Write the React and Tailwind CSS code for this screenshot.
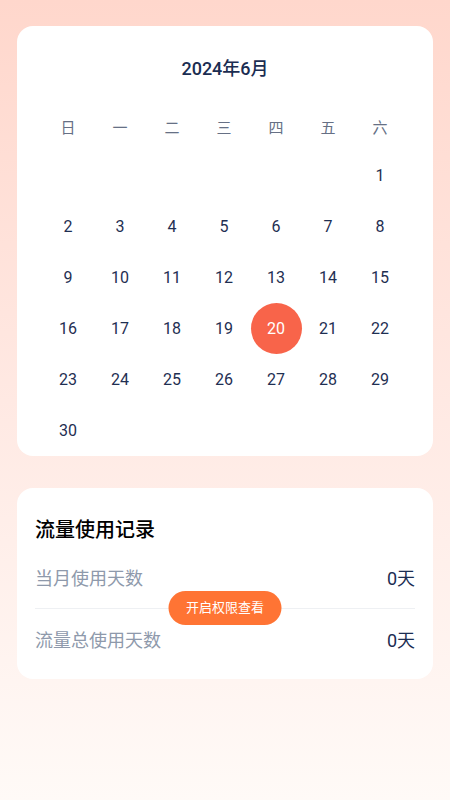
import React from 'react'

const weekdays = ['日', '一', '二', '三', '四', '五', '六']
const FONT = "font-['Roboto','Noto_Sans_CJK_SC',sans-serif]"

function buildDays() {
  // June 2024 starts on Saturday
  const cells = Array(6).fill(null)
  for (let d = 1; d <= 30; d++) cells.push(d)
  return cells
}

export default function App() {
  const days = buildDays()
  return (
    <div className={`min-h-[800px] w-full bg-gradient-to-b from-[#ffd7cc] via-[#ffe9e3] to-[#fffaf7] px-[17px] pt-[26px] ${FONT}`}>
      {/* Calendar */}
      <div className="rounded-2xl bg-white pt-[31px]">
        <h1 className="text-center text-[18px] leading-[24px] font-medium text-[#1b2d52]">2024年6月</h1>
        <div className="mt-[25px] ml-[25px] grid grid-cols-[repeat(7,52px)]">
          {weekdays.map(w => (
            <div key={w} className="h-[44px] flex items-center justify-center text-[15px] text-[#667085]">
              {w}
            </div>
          ))}
          {days.map((d, i) => (
            <div key={i} className="h-[51px] flex items-center justify-center">
              {d === 20 ? (
                <span className="w-[51px] h-[51px] rounded-full bg-[#f8644a] text-white flex items-center justify-center text-[16px]">
                  {d}
                </span>
              ) : (
                <span className="text-[16px] text-[#1f2f52]">{d}</span>
              )}
            </div>
          ))}
        </div>
      </div>

      {/* Usage record */}
      <div className="mt-[32px] rounded-2xl bg-white px-[18px] pt-[28px] pb-[8px]">
        <h2 className="text-[20px] leading-[28px] font-medium text-black">流量使用记录</h2>
        <div className="relative mt-[4px]">
          <div className="h-[60px] flex items-center justify-between text-[18px]">
            <span className="text-[#8e99ab]">当月使用天数</span>
            <span className="text-[#1b2d52]">0天</span>
          </div>
          <div className="h-px bg-[#eef0f3]" />
          <div className="h-[62px] flex items-center justify-between text-[18px]">
            <span className="text-[#8e99ab]">流量总使用天数</span>
            <span className="text-[#1b2d52]">0天</span>
          </div>
          <button className="absolute left-1/2 top-[43px] -translate-x-1/2 w-[113px] h-[34px] rounded-full bg-[#ff7434] text-white text-[13px] flex items-center justify-center">
            开启权限查看
          </button>
        </div>
      </div>
    </div>
  )
}
